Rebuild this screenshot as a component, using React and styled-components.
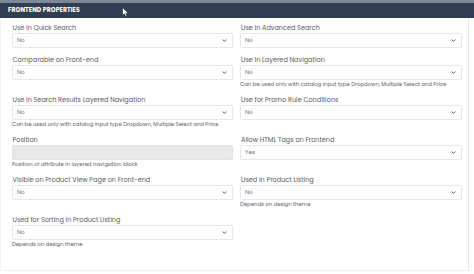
import React from "react";
import styled, { createGlobalStyle } from "styled-components";

const Global = createGlobalStyle`
  html, body { margin: 0; padding: 0; background: #ffffff; }
  body { font-family: "Poppins", "Open Sans", "Noto Sans", sans-serif; }
`;

const Panel = styled.div`
  position: relative;
  width: 469px;
  height: 271px;
  box-sizing: border-box;
  border-right: 1px solid #e6e8eb;
  border-left: 1px solid #f0f1f3;
  border-bottom: 1px solid #eeeff1;
  background: #ffffff;
`;

const Header = styled.div`
  position: relative;
  height: 18px;
  box-sizing: border-box;
  border-top: 3px solid #7d8996;
  background: #2f3f51;
  color: #ffffff;
  font-size: 6.1px;
  font-weight: 700;
  letter-spacing: 0.1px;
  display: flex;
  align-items: center;
  padding-left: 8px;
  margin-left: -1px;
  margin-right: -6px;
`;

const Cursor = styled.svg`
  position: absolute;
  left: 122px;
  top: 4px;
`;

const Grid = styled.div`
  display: grid;
  grid-template-columns: 221px 222px;
  column-gap: 7px;
  row-gap: 7px;
  padding: 4.5px 0 0 11px;
  align-items: start;
`;

const Field = styled.div`
  display: flex;
  flex-direction: column;
`;

const Label = styled.div`
  font-size: 6.5px;
  line-height: 9px;
  color: #575c62;
  margin-bottom: 1px;
  padding-left: ${(p) => (p.$right ? "1px" : "0.5px")};
  white-space: nowrap;
`;

const Box = styled.div`
  height: 15px;
  box-sizing: border-box;
  border: 1px solid ${(p) => (p.$disabled ? "#e2e2e2" : "#e4e6e8")};
  border-radius: 1.5px;
  background: ${(p) => (p.$disabled ? "#e8e8e8" : "#ffffff")};
  display: flex;
  align-items: center;
  justify-content: space-between;
  padding: 0 5px 0 4px;
  font-size: 5.8px;
  color: #6b7075;
`;

const Hint = styled.div`
  font-size: 5.35px;
  line-height: 8px;
  color: #5d6166;
  white-space: nowrap;
`;

const Chevron = () => (
  <svg width="5" height="3" viewBox="0 0 5 3">
    <path d="M0.6 0.6 L2.5 2.3 L4.4 0.6" fill="none" stroke="#4a4f55" strokeWidth="0.9" />
  </svg>
);

const SelectField = ({ label, value = "No", hint, right }) => (
  <Field>
    <Label $right={right}>{label}</Label>
    <Box>
      <span>{value}</span>
      <Chevron />
    </Box>
    {hint && <Hint>{hint}</Hint>}
  </Field>
);

const navHint =
  "Can be used only with catalog input type Dropdown, Multiple Select and Price";

export default function App() {
  return (
    <>
      <Global />
      <Panel>
        <Header>
          FRONTEND PROPERTIES
          <Cursor width="7" height="11" viewBox="0 0 7 11">
            <path
              d="M0.5 0.5 L0.5 8.5 L2.4 6.8 L3.7 9.8 L5 9.2 L3.8 6.3 L6.3 6.3 Z"
              fill="#ffffff"
              stroke="#1b232c"
              strokeWidth="0.6"
            />
          </Cursor>
        </Header>
        <Grid>
          <SelectField label="Use in Quick Search" />
          <SelectField label="Use in Advanced Search" right />
          <SelectField label="Comparable on Front-end" />
          <SelectField label="Use In Layered Navigation" hint={navHint} right />
          <SelectField label="Use In Search Results Layered Navigation" hint={navHint} />
          <SelectField label="Use for Promo Rule Conditions" right />
          <Field>
            <Label>Position</Label>
            <Box $disabled />
            <Hint>Position of attribute in layered navigation block</Hint>
          </Field>
          <SelectField label="Allow HTML Tags on Frontend" value="Yes" right />
          <SelectField label="Visible on Product View Page on Front-end" />
          <SelectField label="Used in Product Listing" hint="Depends on design theme" right />
          <SelectField label="Used for Sorting in Product Listing" hint="Depends on design theme" />
        </Grid>
      </Panel>
    </>
  );
}
